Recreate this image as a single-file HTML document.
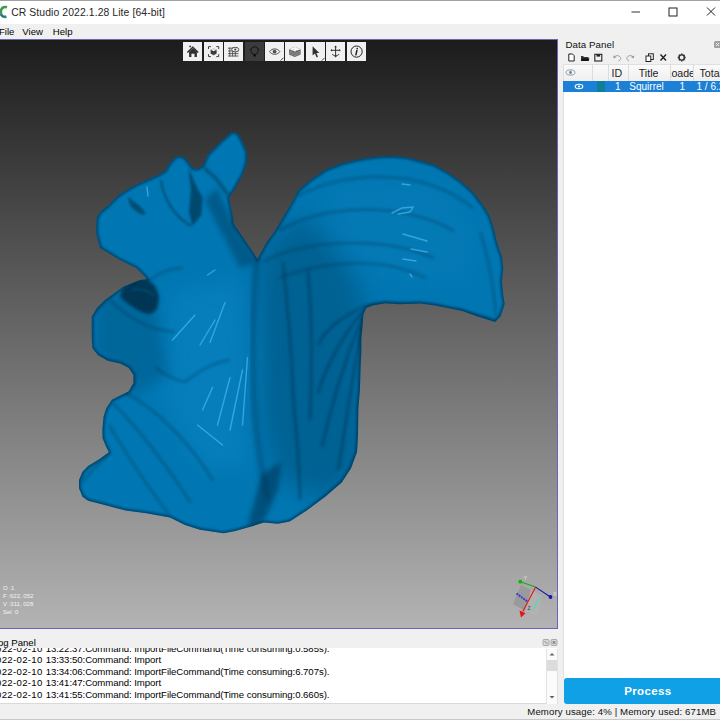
<!DOCTYPE html>
<html><head><meta charset="utf-8">
<style>
*{margin:0;padding:0;box-sizing:border-box}
html,body{width:720px;height:720px;overflow:hidden;background:#f0f0f0;font-family:"Liberation Sans",sans-serif;color:#000}
.a{position:absolute}
.t{position:absolute;white-space:nowrap;line-height:1}
#vp{left:0;top:39px;width:558px;height:590px;border:1px solid #6c64b8;border-left:none;background:linear-gradient(#1c1c1c,#b3b3b3)}
.tb{position:absolute;top:42px;width:19px;height:18.6px;background:#f0f0f0}
.tb svg{position:absolute;left:0;top:0}
.ll{position:absolute;left:-9.6px;font-size:9.6px;white-space:nowrap;color:#000;line-height:1}
.stat{position:absolute;left:3px;font-size:6px;color:#f4f4f4;white-space:nowrap;line-height:1}
</style></head><body>
<!-- title bar -->
<div class="a" style="left:0;top:0;width:720px;height:1px;background:#a3a3a3"></div>
<div class="a" style="left:0;top:1px;width:720px;height:23px;background:#fff"></div>
<svg class="a" style="left:0;top:0" width="12" height="24" viewBox="0 0 12 24">
<path d="M7,7.3 C3.5,6.3 0.8,8.2 0.8,12 C0.8,15.8 3.5,17.7 6.5,16.8" fill="none" stroke="#3c9c48" stroke-width="2.6"/>
<path d="M0.5,14.6 C1.8,16.4 3.8,16.6 6,16" fill="none" stroke="#2a58d8" stroke-width="1.2"/>
</svg>
<div class="t" style="left:11.2px;top:8.2px;font-size:10.4px;letter-spacing:0.09px;color:#262626">CR Studio 2022.1.28 Lite [64-bit]</div>
<svg class="a" style="left:620px;top:1px" width="100" height="23" viewBox="620 1 100 23">
<rect x="631.5" y="11.5" width="8.5" height="1" fill="#333"/>
<rect x="669" y="8" width="8" height="8" fill="none" stroke="#222" stroke-width="1"/>
<path d="M707,7.5 L715,15.5 M715,7.5 L707,15.5" stroke="#222" stroke-width="1"/>
</svg>
<!-- menu -->
<div class="a" style="left:0;top:24px;width:720px;height:15px;background:#f0f0f0"></div>
<div class="t" style="left:-1px;top:26.5px;font-size:9.6px">File</div>
<div class="t" style="left:22.3px;top:26.5px;font-size:9.6px">View</div>
<div class="t" style="left:52.8px;top:26.5px;font-size:9.6px">Help</div>
<!-- viewport -->
<div class="a" id="vp"></div>
<svg class="a" style="left:0;top:0" width="720" height="720" viewBox="0 0 720 720">
<defs>
<clipPath id="sq"><path d="M96.25,225 L96.9,216.7 L101.1,211.1 L108.1,205.6 L117.8,195.8 L126.1,190.3 L135.8,184.7 L148.3,179.2 L159.4,174.3 L165,170.8 L169.2,163.9 L175,157 L180,155.5 L185.5,158 L189.5,163.5 L193.6,168.6 L197.8,168.6 L203.3,164.4 L207.5,154.7 L214.4,147.8 L222.8,139.4 L231.1,132.5 L235.3,131.8 L239.4,135.3 L243.6,143.6 L247.1,151.9 L247.1,161.7 L243.6,172.8 L239.4,181.1 L233.9,190.8 L229,197.8 L230.4,204.7 L232.5,214.4 L233.9,224.2 L240.8,233.9 L249.2,246.4 L257.5,258.9 L265.8,243.6 L275.6,229.7 L283.9,215.8 L292.2,201.9 L297.8,190.8 L310,180 L325,170 L341.7,163.3 L358.3,159.2 L375,156.7 L391.7,155.8 L408.3,157.5 L420,160.5 L433.9,164.6 L447.8,172.2 L461.7,181.9 L472.8,191.7 L482.5,204.2 L489.4,215.3 L493.6,227.8 L496.4,240 L499.5,250 L501.9,256 L503.3,267.8 L501.9,281.7 L503.3,295.6 L504.7,303.9 L500.6,316.4 L495,321.9 L486.7,319.2 L475.6,315.7 L461.7,310.8 L447.8,308.1 L433.9,305.3 L420,303.5 L399.4,304.2 L385.6,303.2 L373.1,305.3 L366.1,308.1 L363.3,315 L362.6,324.7 L361.3,338.6 L361.3,352.5 L360.6,366.4 L359.9,390 L358.3,408.7 L358,435 L357,452 L351,468.3 L341.7,482.5 L325.1,496.7 L306.3,510.8 L289.7,521.5 L277.9,523.8 L263.8,522.6 L252,526.2 L235.4,530.9 L223.6,533.3 L200,529.7 L185,525 L170,517.5 L146.4,513.3 L125.6,510.6 L104.7,505 L88.1,500.8 L82.5,496.7 L79,488.3 L79,480 L82.5,471.7 L88.1,466.1 L99.2,459.2 L108.9,452.2 L106.1,446.7 L102.6,438.3 L102.4,429 L103.6,416.4 L106.4,408.1 L111.9,399.7 L120.3,395.6 L128.6,391.4 L133.5,383.1 L133.5,374.7 L128.6,367.8 L120.3,363.6 L107.8,360.8 L98.1,355.3 L92.5,348.3 L91.8,340 L91.7,316.7 L96.7,308.3 L105,300 L123.3,286.7 L140,280 L146.7,279.2 L145,276.7 L136.7,268.3 L120,260 L100,248 L96.25,233.3 Z"/></clipPath>
<filter id="b1" x="-20%" y="-20%" width="140%" height="140%"><feGaussianBlur stdDeviation="0.8"/></filter>
<filter id="b15" x="-20%" y="-20%" width="140%" height="140%"><feGaussianBlur stdDeviation="1.5"/></filter>
<filter id="b2" x="-20%" y="-20%" width="140%" height="140%"><feGaussianBlur stdDeviation="2.5"/></filter>
<filter id="b5" x="-30%" y="-30%" width="160%" height="160%"><feGaussianBlur stdDeviation="6"/></filter>
<filter id="b10" x="-50%" y="-50%" width="200%" height="200%"><feGaussianBlur stdDeviation="12"/></filter>
</defs>
<path d="M96.25,225 L96.9,216.7 L101.1,211.1 L108.1,205.6 L117.8,195.8 L126.1,190.3 L135.8,184.7 L148.3,179.2 L159.4,174.3 L165,170.8 L169.2,163.9 L175,157 L180,155.5 L185.5,158 L189.5,163.5 L193.6,168.6 L197.8,168.6 L203.3,164.4 L207.5,154.7 L214.4,147.8 L222.8,139.4 L231.1,132.5 L235.3,131.8 L239.4,135.3 L243.6,143.6 L247.1,151.9 L247.1,161.7 L243.6,172.8 L239.4,181.1 L233.9,190.8 L229,197.8 L230.4,204.7 L232.5,214.4 L233.9,224.2 L240.8,233.9 L249.2,246.4 L257.5,258.9 L265.8,243.6 L275.6,229.7 L283.9,215.8 L292.2,201.9 L297.8,190.8 L310,180 L325,170 L341.7,163.3 L358.3,159.2 L375,156.7 L391.7,155.8 L408.3,157.5 L420,160.5 L433.9,164.6 L447.8,172.2 L461.7,181.9 L472.8,191.7 L482.5,204.2 L489.4,215.3 L493.6,227.8 L496.4,240 L499.5,250 L501.9,256 L503.3,267.8 L501.9,281.7 L503.3,295.6 L504.7,303.9 L500.6,316.4 L495,321.9 L486.7,319.2 L475.6,315.7 L461.7,310.8 L447.8,308.1 L433.9,305.3 L420,303.5 L399.4,304.2 L385.6,303.2 L373.1,305.3 L366.1,308.1 L363.3,315 L362.6,324.7 L361.3,338.6 L361.3,352.5 L360.6,366.4 L359.9,390 L358.3,408.7 L358,435 L357,452 L351,468.3 L341.7,482.5 L325.1,496.7 L306.3,510.8 L289.7,521.5 L277.9,523.8 L263.8,522.6 L252,526.2 L235.4,530.9 L223.6,533.3 L200,529.7 L185,525 L170,517.5 L146.4,513.3 L125.6,510.6 L104.7,505 L88.1,500.8 L82.5,496.7 L79,488.3 L79,480 L82.5,471.7 L88.1,466.1 L99.2,459.2 L108.9,452.2 L106.1,446.7 L102.6,438.3 L102.4,429 L103.6,416.4 L106.4,408.1 L111.9,399.7 L120.3,395.6 L128.6,391.4 L133.5,383.1 L133.5,374.7 L128.6,367.8 L120.3,363.6 L107.8,360.8 L98.1,355.3 L92.5,348.3 L91.8,340 L91.7,316.7 L96.7,308.3 L105,300 L123.3,286.7 L140,280 L146.7,279.2 L145,276.7 L136.7,268.3 L120,260 L100,248 L96.25,233.3 Z" fill="#0077b2"/>
<g clip-path="url(#sq)">
 <!-- broad tonal zones -->
 <path d="M258,262 L285,222 L320,225 L350,270 L366,310 L362,470 L330,500 L280,480 L262,420Z" fill="#003a5a" opacity="0.35" filter="url(#b10)"/>
 <path d="M170,290 L245,275 L255,360 L250,470 L200,470 L160,400Z" fill="#1a9ae0" opacity="0.2" filter="url(#b10)"/>
 <path d="M330,180 L440,178 L480,230 L470,290 L380,280 L320,240Z" fill="#1a8ac8" opacity="0.15" filter="url(#b10)"/>
 <path d="M95,300 L150,285 L170,375 L130,395 L95,350Z" fill="#003a5a" opacity="0.25" filter="url(#b5)"/>
 
 <!-- chin pocket -->
 <path d="M122.2,289.4 C128,285 132,282 136.7,280.6 L146.7,279.4 C151,282 154,284 155.6,287.2 C158,292 159,295 158.9,298.3 C158.5,303 158,306 156.7,309.4 C154,312 152,313.5 148.9,313.9 C144,313 140,311 136.7,309.4 C132,306 128,304 125.6,301.7 C122,299 120,297 120,296Z" fill="#002a42" opacity="0.8" filter="url(#b15)"/>
 <path d="M132,290 C140,288 148,290 154,296" fill="none" stroke="#0a6a98" stroke-width="1.5" opacity="0.5" filter="url(#b1)"/>
 <!-- rim -->
 <path d="M96.25,225 L96.9,216.7 L101.1,211.1 L108.1,205.6 L117.8,195.8 L126.1,190.3 L135.8,184.7 L148.3,179.2 L159.4,174.3 L165,170.8 L169.2,163.9 L175,157 L180,155.5 L185.5,158 L189.5,163.5 L193.6,168.6 L197.8,168.6 L203.3,164.4 L207.5,154.7 L214.4,147.8 L222.8,139.4 L231.1,132.5 L235.3,131.8 L239.4,135.3 L243.6,143.6 L247.1,151.9 L247.1,161.7 L243.6,172.8 L239.4,181.1 L233.9,190.8 L229,197.8 L230.4,204.7 L232.5,214.4 L233.9,224.2 L240.8,233.9 L249.2,246.4 L257.5,258.9 L265.8,243.6 L275.6,229.7 L283.9,215.8 L292.2,201.9 L297.8,190.8 L310,180 L325,170 L341.7,163.3 L358.3,159.2 L375,156.7 L391.7,155.8 L408.3,157.5 L420,160.5 L433.9,164.6 L447.8,172.2 L461.7,181.9 L472.8,191.7 L482.5,204.2 L489.4,215.3 L493.6,227.8 L496.4,240 L499.5,250 L501.9,256 L503.3,267.8 L501.9,281.7 L503.3,295.6 L504.7,303.9 L500.6,316.4 L495,321.9 L486.7,319.2 L475.6,315.7 L461.7,310.8 L447.8,308.1 L433.9,305.3 L420,303.5 L399.4,304.2 L385.6,303.2 L373.1,305.3 L366.1,308.1 L363.3,315 L362.6,324.7 L361.3,338.6 L361.3,352.5 L360.6,366.4 L359.9,390 L358.3,408.7 L358,435 L357,452 L351,468.3 L341.7,482.5 L325.1,496.7 L306.3,510.8 L289.7,521.5 L277.9,523.8 L263.8,522.6 L252,526.2 L235.4,530.9 L223.6,533.3 L200,529.7 L185,525 L170,517.5 L146.4,513.3 L125.6,510.6 L104.7,505 L88.1,500.8 L82.5,496.7 L79,488.3 L79,480 L82.5,471.7 L88.1,466.1 L99.2,459.2 L108.9,452.2 L106.1,446.7 L102.6,438.3 L102.4,429 L103.6,416.4 L106.4,408.1 L111.9,399.7 L120.3,395.6 L128.6,391.4 L133.5,383.1 L133.5,374.7 L128.6,367.8 L120.3,363.6 L107.8,360.8 L98.1,355.3 L92.5,348.3 L91.8,340 L91.7,316.7 L96.7,308.3 L105,300 L123.3,286.7 L140,280 L146.7,279.2 L145,276.7 L136.7,268.3 L120,260 L100,248 L96.25,233.3 Z" fill="none" stroke="#002a44" stroke-width="4" opacity="0.6" filter="url(#b1)"/>
 <!-- chest/tail junction -->
 <path d="M257,259 C253,300 252,350 254,400 C256,440 262,470 268,500" fill="none" stroke="#002e4a" stroke-width="4" opacity="0.45" filter="url(#b2)"/>
 <!-- tail folds -->
 <g fill="none" stroke="#003450" stroke-width="2.2" opacity="0.4" filter="url(#b15)">
  <path d="M298,196 C340,172 420,165 473,208"/>
  <path d="M279,231 C320,205 400,200 454,231"/>
  <path d="M263,262 C300,240 380,235 434,258"/>
  <path d="M279,278 C320,262 380,255 426,278"/>
  <path d="M480,232 C490,262 494,288 496,316"/>
  <path d="M362,307 C400,300 450,306 497,322" stroke="#002a44" stroke-width="4.5" opacity="0.6"/>
 </g>
 <g fill="none" stroke="#002c44" stroke-width="2.4" opacity="0.45" filter="url(#b15)">
  <path d="M362,308 C340,318 325,330 318,345"/>
  <path d="M362,312 C340,340 325,370 318,393"/>
  <path d="M362,318 C345,360 330,410 322,447"/>
  <path d="M362,325 C352,380 345,430 338,470"/>
  <path d="M283,262 C288,310 292,360 293,393 C296,430 300,470 300,500"/>
  <path d="M308,270 C312,320 312,380 310,420"/>
 </g>
 <path d="M281,462 L278.3,488.6 L265.8,517.8 L258,526 L247.8,525 L261.7,474.7Z" fill="#002c4a" opacity="0.5" filter="url(#b2)"/>
 <!-- body creases -->
 <g fill="none" stroke="#003450" stroke-width="2.2" opacity="0.4" filter="url(#b15)">
  
  <path d="M155,367 C165,375 175,380 185,382 C200,370 215,362 230,360"/>
  <path d="M82,482 C92,470 100,462 110,454"/>
  <path d="M113,403 C140,430 170,470 191,503"/>
  <path d="M124,392 C160,410 195,450 213,481"/>
  <path d="M109,425 C130,460 150,490 169,514"/>
  <path d="M110,300 C130,320 150,330 175,332"/>
 </g>
 <!-- face details -->
 <path d="M128,197 C134,202 142,206 146,214 C140,216 134,210 130,205Z" fill="#003048" opacity="0.6" filter="url(#b1)"/>
 <path d="M188.5,168 L196.3,186.3 L202.5,197.5 L201.3,215 L192.5,226 L189,212 L191,190Z" fill="#002a42" opacity="0.6" filter="url(#b1)"/>
 <path d="M161,180 C162,192 170,210 182.5,220 L191,226" fill="none" stroke="#002a40" stroke-width="1.8" opacity="0.55" filter="url(#b1)"/>
 <path d="M203.3,167.2 L215.8,178.3 L228.3,195" fill="none" stroke="#002a40" stroke-width="3" opacity="0.5" filter="url(#b15)"/>
 <path d="M216.7,188 L233.3,223.3 L256.7,262 L240,268 L220,230 L205,200Z" fill="#002a44" opacity="0.35" filter="url(#b2)"/>
 <path d="M150,280 C160,272 172,268 183,268" fill="none" stroke="#002a40" stroke-width="2" opacity="0.35" filter="url(#b15)"/>
 <!-- highlights -->
 <g stroke="#48b8f4" stroke-width="1.4" opacity="0.7" fill="none" stroke-linecap="round">
  <path d="M147,187 L148,196"/>
  <path d="M402,184 L410,185"/>
  <path d="M392,213 L402,208 L413,207 L410,212 L398,214"/>
  <path d="M403,234 L427,241"/>
  <path d="M411,249 L427,252"/>
  <path d="M403,259 L416,261"/>
  <path d="M410,274 L412,277"/>
  <path d="M172.5,340 L195,315"/>
  <path d="M210,342.5 L225,302.5"/>
  <path d="M200,345 L215,320"/>
  <path d="M207.5,275 L215,270"/>
  <path d="M202.5,410 L212.5,387.5"/>
  <path d="M217.5,425 L230,377.5"/>
  <path d="M230,430 L242.5,370"/>
  <path d="M242.5,425 L247.5,357.5"/>
  <path d="M197.5,425 L222.5,445"/>
 </g>
</g>

</svg>
<div class="tb" style="left:183px;background:#f0f0f0"><svg width="19" height="19" viewBox="0 0 19 19"><path d="M4.4,10.5 L9.8,5.2 L15.2,10.5" stroke="#303030" stroke-width="1.5" fill="none"/><path d="M6.1,15 V9.6 L9.8,6.4 L13.9,9.6 V15 H11.5 V11.8 H8.4 V15Z" fill="#303030"/><circle cx="7.2" cy="4.4" r="0.9" fill="#303030"/></svg></div>
<div class="tb" style="left:203.8px;background:#f0f0f0"><svg width="19" height="19" viewBox="0 0 19 19"><path d="M4.5,7 V4.6 H6.9 M12.3,4.6 H14.7 V7 M14.7,12.2 V14.6 H12.3 M6.9,14.6 H4.5 V12.2" fill="none" stroke="#404040" stroke-width="1"/><path d="M9.6,6.4 L12.6,7.8 L12.6,11.6 L9.6,13.2 L6.6,11.6 L6.6,7.8Z" fill="#383838"/><path d="M6.6,7.8 L9.6,6.4 L12.6,7.8 L9.6,9.2Z" fill="#e8e8e8"/><path d="M9.6,9.2 V13.2" stroke="#555" stroke-width="0.6"/></svg></div>
<div class="tb" style="left:224.2px;background:#f0f0f0"><svg width="19" height="19" viewBox="0 0 19 19"><g stroke="#505050" stroke-width="0.9" fill="none"><path d="M4,6.2 H9 M4,9 H14.5 M4,11.6 H14.5 M4,14 H14.5 M5.8,5.5 V14.5 M8.6,5.5 V14.5 M11.4,10 V14.5"/></g><ellipse cx="11.3" cy="7.6" rx="3.6" ry="2.3" fill="#f0f0f0" stroke="#404040" stroke-width="0.9"/><circle cx="11.3" cy="7.6" r="1.1" fill="#404040"/></svg></div>
<div class="tb" style="left:244.9px;background:#3c3c3c"><svg width="19" height="19" viewBox="0 0 19 19"><path d="M9.6,4.8 C7.3,4.8 6,6.5 6,8.3 C6,10 7.4,11 8,12.3 L11.2,12.3 C11.8,11 13.2,10 13.2,8.3 C13.2,6.5 11.9,4.8 9.6,4.8Z" fill="none" stroke="#101010" stroke-width="1"/><path d="M8.3,12.8 H10.9 V14 C10.9,14.8 8.3,14.8 8.3,14Z" fill="#101010"/><path d="M4.3,7.2 H5.2 M14,7.2 H14.9 M5.2,11.6 L5.8,11.2 M14,11.6 L13.4,11.2" stroke="#151515" stroke-width="0.7"/></svg></div>
<div class="tb" style="left:265.2px;background:#f0f0f0"><svg width="19" height="19" viewBox="0 0 19 19"><path d="M4.6,9.6 C6.8,6 12.6,6 14.8,9.6 C12.6,13.2 6.8,13.2 4.6,9.6Z" fill="none" stroke="#505050" stroke-width="1"/><circle cx="9.6" cy="9.6" r="1.9" fill="#505050"/><path d="M15.6,18.6 L18.6,15.6" stroke="#303030" stroke-width="0.9"/></svg></div>
<div class="tb" style="left:285.3px;background:#f0f0f0"><svg width="19" height="19" viewBox="0 0 19 19"><path d="M4,7.3 L9.8,4.8 L15.6,7.3 L15.6,12.6 L9.8,15 L4,12.6Z" fill="#606060"/><path d="M4,7.3 L9.8,4.8 L15.6,7.3 L9.8,9.6Z" fill="#f4f4f4"/><g stroke="#9a9a9a" stroke-width="0.7" fill="none"><path d="M4,9.3 L9.8,11.8 L15.6,9.3 M4,11.2 L9.8,13.6 L15.6,11.2"/><path d="M5.5,14 L12,8.2 M8,15 L15,9 M4.5,11 L9,7.5"/></g></svg></div>
<div class="tb" style="left:305.9px;background:#f0f0f0"><svg width="19" height="19" viewBox="0 0 19 19"><path d="M6.6,4.3 L6.6,13.6 L8.9,11.6 L10.6,15.4 L12,14.8 L10.4,11.1 L13.3,11.1Z" fill="#303030"/><path d="M15.8,18.6 L18.6,15.8" stroke="#303030" stroke-width="0.9"/></svg></div>
<div class="tb" style="left:326px;background:#f0f0f0"><svg width="19" height="19" viewBox="0 0 19 19"><g stroke="#282828" stroke-width="0.95" fill="none"><path d="M9.6,4.6 V14.6 M5.4,8.3 H13.8"/><path d="M6.2,12 C7,14.2 12.2,14.2 13,12"/></g><path d="M9.6,3.6 L8.3,5.3 H10.9Z M4.4,8.3 L6,7.1 V9.5Z M14.8,8.3 L13.2,7.1 V9.5Z M8.2,14.3 H11 L9.6,15.6Z" fill="#282828"/></svg></div>
<div class="tb" style="left:347px;background:#f0f0f0"><svg width="19" height="19" viewBox="0 0 19 19"><circle cx="9.6" cy="9.6" r="5.6" fill="none" stroke="#202020" stroke-width="1"/><circle cx="10.2" cy="6.6" r="0.85" fill="#202020"/><path d="M9.9,8.4 L8.9,12.8" stroke="#202020" stroke-width="1.5" stroke-linecap="round"/></svg></div>
<div class="stat" style="top:584.6px">O :1</div>
<div class="stat" style="top:592.7px">F :622, 052</div>
<div class="stat" style="top:600.8px">V :311, 028</div>
<div class="stat" style="top:608.9px">Sel :0</div>
<svg class="a" style="left:495px;top:565px" width="62" height="63" viewBox="495 565 62 63">
<path d="M521,585 L531,590 L525,611 L513,604Z" fill="#9a9a9a"/>
<path d="M531,590 L542,596 L537,617 L525,611Z" fill="#b2b2b2"/>
<path d="M516.5,593.5 L527.5,601.5" stroke="#3a3ad8" stroke-width="2" stroke-dasharray="2,0.8"/>
<path d="M533,610 L540,597.5" stroke="#40e0b0" stroke-width="1.6" stroke-dasharray="1.6,1"/>
<line x1="535.6" y1="587.1" x2="520.3" y2="581.7" stroke="#10b010" stroke-width="1.1"/>
<circle cx="520.3" cy="581.7" r="1.9" fill="#10b010"/>
<line x1="535.6" y1="587.1" x2="550.5" y2="597" stroke="#1515a8" stroke-width="1.1"/>
<circle cx="550.5" cy="597" r="1.9" fill="#1515a8"/>
<line x1="535.6" y1="587.1" x2="522.8" y2="611.5" stroke="#e81010" stroke-width="1.1"/>
<path d="M519.5,610.5 L525.5,613.2 L521,617.5Z" fill="#e81010"/>
<text x="523.8" y="580" font-size="5" fill="#e8e8e8" font-family="Liberation Sans">Y</text>
<text x="553.2" y="596" font-size="5" fill="#e8e8e8" font-family="Liberation Sans">X</text>
<text x="527.6" y="610.3" font-size="5" fill="#404040" font-family="Liberation Sans">Z</text>
</svg>
<!-- right panel -->
<div class="t" style="left:565.5px;top:40.3px;font-size:9.7px;letter-spacing:0.08px;color:#111">Data Panel</div>
<svg class="a" style="left:712px;top:39px" width="8" height="10" viewBox="712 39 8 10">
<rect x="714" y="41" width="8" height="7" rx="1.5" fill="#a0a0a0"/>
<path d="M716,43 L719,46 M719,43 L716,46" stroke="#eee" stroke-width="1"/>
</svg>
<svg class="a" style="left:565px;top:52px" width="125" height="11" viewBox="565 52 125 11">
<path d="M568.8,54 H572.5 L574.2,55.7 V61 H568.8Z" fill="#fff" stroke="#222" stroke-width="1"/>
<path d="M581,56 L583,56 L584,57 L588.5,57 L588.5,61 L581,61Z" fill="#333"/><path d="M582,58.5 L589.5,58.5 L588.5,61 L581,61Z" fill="#111"/>
<rect x="594.8" y="54.3" width="7" height="6.7" fill="none" stroke="#222" stroke-width="1.1"/><rect x="596.5" y="54.3" width="3.6" height="2.3" fill="#222"/>
<path d="M614,57.5 C615.5,55 619,55 620.5,57.5 C621,59 620,60.5 618.5,61" fill="none" stroke="#9a9a9a" stroke-width="1"/><path d="M613,55.5 L614,58.5 L616.5,57Z" fill="#9a9a9a"/>
<path d="M633.5,57.5 C632,55 628.5,55 627,57.5 C626.5,59 627.5,60.5 629,61" fill="none" stroke="#9a9a9a" stroke-width="1"/><path d="M634.5,55.5 L633.5,58.5 L631,57Z" fill="#9a9a9a"/>
<rect x="648.5" y="53.8" width="4.8" height="5.7" fill="#fff" stroke="#222" stroke-width="1"/><rect x="646" y="56" width="4.8" height="5.5" fill="#fff" stroke="#222" stroke-width="1"/>
<path d="M660.5,54.5 L666,60.5 M666,54.5 L660.5,60.5" stroke="#222" stroke-width="1.4"/>
<circle cx="681.7" cy="57.5" r="2.6" fill="none" stroke="#303030" stroke-width="1.4"/>
<path d="M681.7,53.5 V55 M681.7,60 V61.5 M677.7,57.5 H679.2 M684.2,57.5 H685.7 M678.9,54.7 L679.9,55.7 M684.5,60.3 L683.5,59.3 M684.5,54.7 L683.5,55.7 M678.9,60.3 L679.9,59.3" stroke="#303030" stroke-width="1.5"/>
</svg>
<div class="a" style="left:563px;top:64px;width:157px;height:17px;background:linear-gradient(#fafafa,#efefef);border-top:1px solid #e0e0e0;border-left:1px solid #e0e0e0"></div>
<div class="a" style="left:592px;top:64px;width:1px;height:17px;background:#dcdcdc"></div>
<div class="a" style="left:607.5px;top:64px;width:1px;height:17px;background:#dcdcdc"></div>
<div class="a" style="left:627.5px;top:64px;width:1px;height:17px;background:#dcdcdc"></div>
<div class="a" style="left:669.5px;top:64px;width:1px;height:17px;background:#dcdcdc"></div>
<div class="a" style="left:693px;top:64px;width:1px;height:17px;background:#dcdcdc"></div>
<svg class="a" style="left:565px;top:68px" width="11" height="9" viewBox="0 0 11 9"><ellipse cx="5.5" cy="4.5" rx="4.5" ry="2.6" fill="none" stroke="#8a9aa4" stroke-width="1"/><circle cx="5.5" cy="4.5" r="1.4" fill="#6e8490"/></svg>
<div class="t" style="left:611.5px;top:68.3px;font-size:10.6px;color:#222">ID</div>
<div class="t" style="left:638.8px;top:68.3px;font-size:10.6px;color:#222">Title</div>
<div class="a" style="left:670.5px;top:65px;width:22.5px;height:16px;overflow:hidden"><div class="t" style="left:-5px;top:3.3px;font-size:10.6px;color:#222">Loade</div></div>
<div class="t" style="left:699.5px;top:68.3px;font-size:10.6px;color:#222">Total</div>
<div class="a" style="left:563px;top:81px;width:157px;height:11px;background:#1b80d6"></div>
<svg class="a" style="left:574px;top:83px" width="10" height="7" viewBox="0 0 10 7"><ellipse cx="5" cy="3.5" rx="3.8" ry="2.2" fill="none" stroke="#fff" stroke-width="1.1"/><circle cx="5" cy="3.5" r="1.1" fill="#fff"/></svg>
<div class="a" style="left:596.5px;top:81px;width:8.5px;height:11px;background:#0f7f99"></div>
<div class="t" style="left:615px;top:82.4px;font-size:10px;color:#fff">1</div>
<div class="t" style="left:629.3px;top:82.4px;font-size:10px;color:#fff">Squirrel</div>
<div class="t" style="left:679.5px;top:82.4px;font-size:10px;color:#fff">1</div>
<div class="t" style="left:696.5px;top:82.4px;font-size:10px;color:#fff">1 / 6.2</div>
<div class="a" style="left:563px;top:92px;width:157px;height:586px;background:#fff;border-left:1px solid #e0e0e0"></div>
<div class="a" style="left:563.7px;top:678px;width:160px;height:25.5px;background:#10a0e6;border-radius:3px"></div>
<div class="t" style="left:624.2px;top:685.6px;font-size:11.5px;letter-spacing:0.35px;font-weight:bold;color:#fff">Process</div>
<!-- log panel -->
<div class="t" style="left:-7.4px;top:638.2px;font-size:9.6px">Log Panel</div>
<svg class="a" style="left:542px;top:638px" width="16" height="9" viewBox="542 638 16 9">
<rect x="543" y="639.5" width="6" height="6" rx="1" fill="#d8d8d8" stroke="#9a9a9a" stroke-width="0.8"/>
<rect x="551" y="639.5" width="6" height="6" rx="1" fill="#d8d8d8" stroke="#9a9a9a" stroke-width="0.8"/>
<path d="M552.6,641 L555.4,644 M555.4,641 L552.6,644" stroke="#555" stroke-width="0.8"/>
<path d="M544.5,641 L547.5,644" stroke="#666" stroke-width="0.7"/>
</svg>
<div class="a" style="left:0;top:648px;width:558px;height:56px;background:#fff;overflow:hidden;border-bottom:1px solid #d9d9d9">
<div class="ll" style="top:-4.29px"><span style="letter-spacing:0.32px">2022-02-10 </span><span style="letter-spacing:-0.056px">13:22:37:Command: ImportFileCommand(Time consuming:0.585s).</span></div>
<div class="ll" style="top:7.21px"><span style="letter-spacing:0.32px">2022-02-10 </span><span style="letter-spacing:-0.056px">13:33:50:Command: Import</span></div>
<div class="ll" style="top:18.81px"><span style="letter-spacing:0.32px">2022-02-10 </span><span style="letter-spacing:-0.056px">13:34:06:Command: ImportFileCommand(Time consuming:6.707s).</span></div>
<div class="ll" style="top:30.41px"><span style="letter-spacing:0.32px">2022-02-10 </span><span style="letter-spacing:-0.056px">13:41:47:Command: Import</span></div>
<div class="ll" style="top:42.01px"><span style="letter-spacing:0.32px">2022-02-10 </span><span style="letter-spacing:-0.056px">13:41:55:Command: ImportFileCommand(Time consuming:0.660s).</span></div>
</div>
<div class="a" style="left:546px;top:648.5px;width:11.5px;height:55.5px;background:#fbfbfb;border-left:1px solid #e2e2e2;border-right:1px solid #e2e2e2"></div>
<div class="a" style="left:547px;top:660px;width:10px;height:11px;background:#dcdcdc"></div>
<svg class="a" style="left:546px;top:648px" width="12" height="56" viewBox="0 0 12 56"><path d="M3.5,7.5 L6,5 L8.5,7.5Z" fill="#606060"/><path d="M3.5,48 L6,50.5 L8.5,48Z" fill="#606060"/></svg>
<!-- status -->
<div class="t" style="left:527.3px;top:707.3px;font-size:9.6px;letter-spacing:0.12px;color:#111">Memory usage: 4% | Memory used: 671MB</div>
<div class="a" style="left:0;top:719px;width:720px;height:1px;background:#c8c8c8"></div>
</body></html>
